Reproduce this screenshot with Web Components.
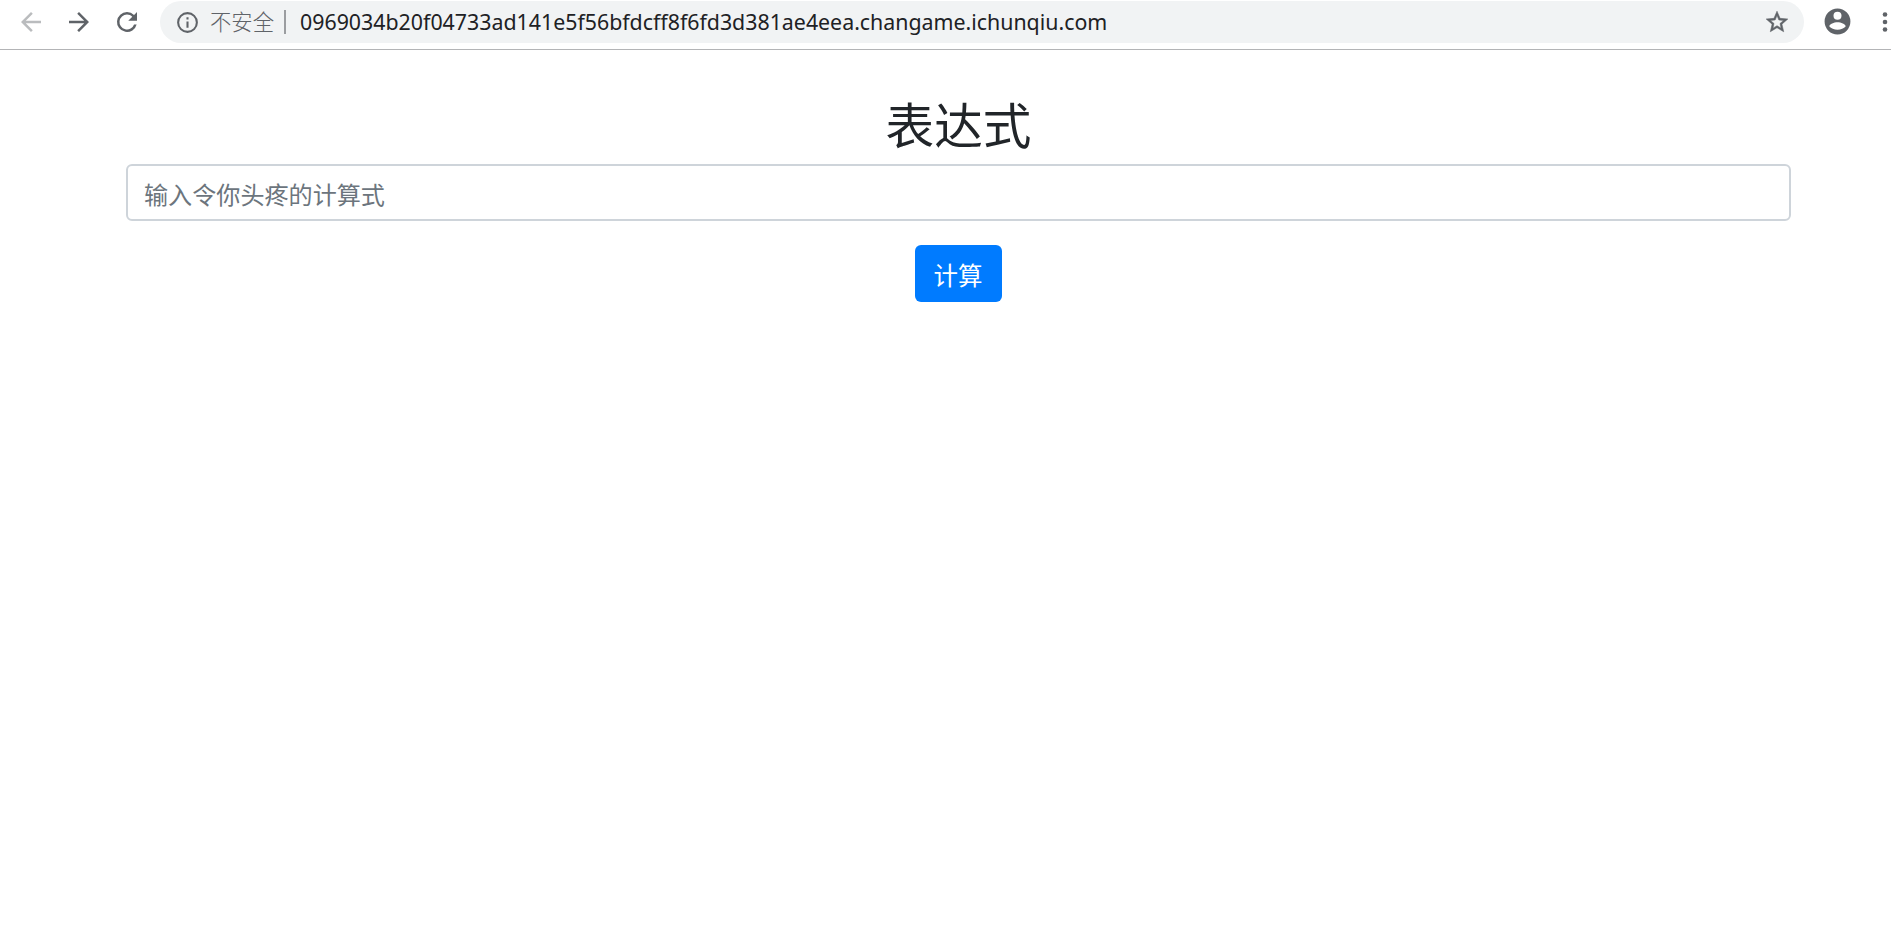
<!DOCTYPE html>
<html lang="zh-CN">
<head>
<meta charset="utf-8">
<title>表达式</title>
<style>
	body {
		margin: 0;
		height: 100vh;
		overflow: hidden;
		background: #fff;
		color: #212529;
		font-family: "Noto Sans", "Noto Sans CJK SC", sans-serif;
	}
</style>
</head>
<body>
<browser-toolbar>
	<tool-icon slot="nav" name="back" style="color: #babcbe"></tool-icon>
	<tool-icon slot="nav" name="forward"></tool-icon>
	<tool-icon slot="nav" name="reload"></tool-icon>
	<address-bar status="不安全">0969034b20f04733ad141e5f56bfdcff8f6fd3d381ae4eea.changame.ichunqiu.com</address-bar>
	<tool-icon slot="actions" name="account"></tool-icon>
	<tool-icon slot="actions" name="menu"></tool-icon>
</browser-toolbar>
<calc-form placeholder="输入令你头疼的计算式">
	<span slot="title">表达式</span>
	<calc-button slot="submit">计算</calc-button>
</calc-form>

<script>
	const html = (strings, ...values) => {
		const template = document.createElement("template");
		template.innerHTML = String.raw({ raw: strings }, ...values);
		return template.content.cloneNode(true);
	};

	const ICONS = {
		back: {
			width: 30,
			height: 30,
			viewBox: "0 0 24 24",
			body: `<path d="M20 11H7.83l5.59-5.59L12 4l-8 8 8 8 1.41-1.41L7.83 13H20z"/>`,
		},
		forward: {
			width: 30,
			height: 30,
			viewBox: "0 0 24 24",
			body: `<path d="M12 4l-1.41 1.41L16.17 11H4v2h12.17l-5.58 5.59L12 20l8-8z"/>`,
		},
		reload: {
			width: 30,
			height: 30,
			viewBox: "0 0 24 24",
			body: `<path d="M17.65 6.35A7.96 7.96 0 0 0 12 4a8 8 0 1 0 7.73 10h-2.08A6 6 0 1 1 12 6c1.66 0 3.14.69 4.22 1.78L13 11h7V4z"/>`,
		},
		info: {
			width: 25,
			height: 25,
			viewBox: "0 0 24 24",
			body: `<path d="M11 17h2v-6h-2zm1-15a10 10 0 1 0 0 20 10 10 0 0 0 0-20zm0 18a8 8 0 1 1 0-16 8 8 0 0 1 0 16zM11 9h2V7h-2z"/>`,
		},
		star: {
			width: 26,
			height: 26,
			viewBox: "0 0 24 24",
			body: `<path stroke="currentColor" stroke-width=".5" d="M22 9.24l-7.19-.62L12 2 9.19 8.63 2 9.24l5.46 4.73L5.82 21 12 17.27 18.18 21l-1.63-7.03zM12 15.4l-3.76 2.27 1-4.28-3.32-2.88 4.38-.38L12 6.1l1.71 4.04 4.38.38-3.32 2.88 1 4.28z"/>`,
		},
		account: {
			width: 31,
			height: 31,
			viewBox: "0 0 24 24",
			body: `<path fill-rule="evenodd" d="M12 2a10 10 0 1 0 0 20 10 10 0 0 0 0-20zm0 2.5a3.1 3.1 0 1 1 0 6.2 3.1 3.1 0 0 1 0-6.2zM12 12.6c2.8 0 6.1 1.3 6.4 3.1-1.4 1.7-3.8 2.7-6.4 2.7s-5-1-6.4-2.7c.3-1.8 3.6-3.1 6.4-3.1z"/>`,
		},
		menu: {
			width: 12,
			height: 30,
			viewBox: "7.2 0 9.6 24",
			body: `<circle cx="12" cy="6" r="1.85"/><circle cx="12" cy="12" r="1.85"/><circle cx="12" cy="18" r="1.85"/>`,
		},
	};

	class ToolIcon extends HTMLElement {
		constructor() {
			super();
			this.attachShadow({ mode: "open" });
		}

		connectedCallback() {
			const { width, height, viewBox, body } = ICONS[this.getAttribute("name")];
			this.shadowRoot.replaceChildren(html`<style>
				:host {
					display: block;
					flex: none;
					color: #5f6368;
				}
				svg {
					display: block;
					fill: currentColor;
				}
			</style>
			<svg width="${width}" height="${height}" viewBox="${viewBox}">${body}</svg>`);
		}
	}
	customElements.define("tool-icon", ToolIcon);

	class AddressBar extends HTMLElement {
		#status = this.getAttribute("status") ?? "";
		#content = html`<style>
			:host {
				display: flex;
				align-items: center;
				flex: 1;
				box-sizing: border-box;
				height: 42px;
				padding: 0 14px 0 15px;
				border-radius: 21px;
				background: #f1f3f4;
				font-size: 21.35px;
				line-height: 30px;
				white-space: nowrap;
			}
			.status {
				margin: 0 0 2px 10px;
				color: #5f6368;
				font-family: "Noto Sans CJK SC", sans-serif;
				font-weight: 300;
			}
			.divider {
				width: 2px;
				height: 24px;
				margin: 0 14px 0 10px;
				background: #9b9da0;
			}
			.url {
				flex: 1;
				color: #202124;
			}
		</style>
		<tool-icon name="info"></tool-icon>
		<span class="status">${this.#status}</span>
		<span class="divider"></span>
		<span class="url"><slot></slot></span>
		<tool-icon name="star"></tool-icon>`;

		constructor() {
			super();
			this.attachShadow({ mode: "open" }).append(this.#content);
		}
	}
	customElements.define("address-bar", AddressBar);

	class BrowserToolbar extends HTMLElement {
		#content = html`<style>
			:host {
				display: flex;
				align-items: center;
				box-sizing: border-box;
				height: 50px;
				padding: 1px 0 6px 16px;
				border-bottom: 1px solid #b3b4b6;
			}
			nav,
			.actions {
				display: flex;
				align-items: center;
				padding-bottom: 1px;
			}
			nav {
				gap: 18px;
				margin-right: 18px;
			}
			.actions {
				gap: 26px;
				margin-left: 18px;
			}
		</style>
		<nav><slot name="nav"></slot></nav>
		<slot></slot>
		<div class="actions"><slot name="actions"></slot></div>`;

		constructor() {
			super();
			this.attachShadow({ mode: "open" }).append(this.#content);
		}
	}
	customElements.define("browser-toolbar", BrowserToolbar);

	class CalcButton extends HTMLElement {
		#content = html`<style>
			:host {
				display: inline-block;
			}
			button {
				display: block;
				width: 87px;
				height: 57px;
				padding: 2px 1px 0 0;
				border: 0;
				border-radius: 6px;
				background: #007bff;
				color: #fff;
				font: 24.5px/36px "Noto Sans CJK SC", sans-serif;
				cursor: pointer;
			}
		</style>
		<button type="button"><slot></slot></button>`;

		constructor() {
			super();
			this.attachShadow({ mode: "open" }).append(this.#content);
		}
	}
	customElements.define("calc-button", CalcButton);

	class CalcForm extends HTMLElement {
		#placeholder = this.getAttribute("placeholder") ?? "";
		#content = html`<style>
			:host {
				display: block;
				padding: 44px 100px 0 126px;
				text-align: center;
			}
			h1 {
				margin: 0 0 12px;
				font: 400 48.6px/58px "Noto Sans CJK SC", sans-serif;
			}
			input {
				display: block;
				box-sizing: border-box;
				width: 100%;
				height: 57px;
				margin-bottom: 24px;
				padding: 1px 16px 0;
				border: 2px solid #ced4da;
				border-radius: 6px;
				outline: 0;
				background: #fff;
				color: #495057;
				font: 400 24.1px/36px "Noto Sans CJK SC", sans-serif;
			}
			input::placeholder {
				color: #6c757d;
				opacity: 1;
			}
		</style>
		<h1><slot name="title"></slot></h1>
		<input type="text" placeholder="${this.#placeholder}">
		<slot name="submit"></slot>`;

		constructor() {
			super();
			this.attachShadow({ mode: "open" }).append(this.#content);
		}
	}
	customElements.define("calc-form", CalcForm);
</script>
</body>
</html>
